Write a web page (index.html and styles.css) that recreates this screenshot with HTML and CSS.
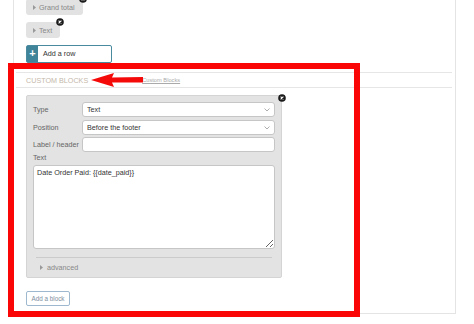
FILE: index.html
```html
<!DOCTYPE html>
<html lang="en">
<head>
    <meta charset="UTF-8">
    <meta name="viewport" content="width=device-width, initial-scale=1.0">
    <title>Custom Blocks</title>
    <link rel="stylesheet" href="styles.css">
</head>
<body>

    <div class="panel">
        <div class="tag">
            <svg class="caret" width="3" height="5" viewBox="0 0 3 5"><path d="M0 0 L3 2.5 L0 5 Z" fill="#999"/></svg>
            Grand total
            <svg class="close-x" width="8" height="8" viewBox="0 0 8 8"><circle cx="4" cy="4" r="3.8" fill="#1a1a1a"/><path d="M2.6 2.6 L5.4 5.4 M5.4 2.6 L2.6 5.4" stroke="#fff" stroke-width="1.1"/></svg>
        </div>
        <div class="tag">
            <svg class="caret" width="3" height="5" viewBox="0 0 3 5"><path d="M0 0 L3 2.5 L0 5 Z" fill="#999"/></svg>
            Text
            <svg class="close-x" width="8" height="8" viewBox="0 0 8 8"><circle cx="4" cy="4" r="3.8" fill="#1a1a1a"/><path d="M2.6 2.6 L5.4 5.4 M5.4 2.6 L2.6 5.4" stroke="#fff" stroke-width="1.1"/></svg>
        </div>

        <div class="add-row">
            <span class="plus">+</span>
            <span class="add-row-label">Add a row</span>
        </div>

        <div class="section-head">
            <span class="section-title">CUSTOM BLOCKS</span>
            <a class="section-link" href="#">Custom Blocks</a>
        </div>

        <div class="block">
            <svg class="close-x block-close" width="8" height="8" viewBox="0 0 8 8"><circle cx="4" cy="4" r="3.8" fill="#1a1a1a"/><path d="M2.6 2.6 L5.4 5.4 M5.4 2.6 L2.6 5.4" stroke="#fff" stroke-width="1.1"/></svg>

            <div class="field">
                <label class="field-label">Type</label>
                <div class="select-wrap">
                    <select class="control"><option>Text</option></select>
                    <svg class="chevron" width="6" height="4" viewBox="0 0 6 4"><path d="M0.5 0.5 L3 3 L5.5 0.5" fill="none" stroke="#999" stroke-width="0.8"/></svg>
                </div>
            </div>
            <div class="field">
                <label class="field-label">Position</label>
                <div class="select-wrap">
                    <select class="control"><option>Before the footer</option></select>
                    <svg class="chevron" width="6" height="4" viewBox="0 0 6 4"><path d="M0.5 0.5 L3 3 L5.5 0.5" fill="none" stroke="#999" stroke-width="0.8"/></svg>
                </div>
            </div>
            <div class="field">
                <label class="field-label">Label / header</label>
                <input class="control" type="text">
            </div>

            <div class="text-label">Text</div>
            <textarea class="text-area">Date Order Paid: {{date_paid}}</textarea>

            <hr class="divider">

            <div class="advanced">
                <svg class="caret" width="3" height="5" viewBox="0 0 3 5"><path d="M0 0 L3 2.5 L0 5 Z" fill="#999"/></svg>
                advanced
            </div>
        </div>

        <button class="add-block">Add a block</button>
    </div>

    <!-- annotation drawn over the screenshot -->
    <div class="highlight"></div>
    <svg class="arrow" width="58" height="20" viewBox="0 0 58 20">
        <path d="M3 10 L26 3 L24 7.5 L55 7 L55 12.5 L24 12.5 L26 17 Z" fill="#f50a0a"/>
    </svg>

</body>
</html>
```

FILE: styles.css
```css
body {
    margin: 0;
    font-family: "Liberation Sans", Arial, sans-serif;
    font-size: 7.2px;
    color: #333;
    background: #fff;
}

.panel {
    box-sizing: border-box;
    width: 443px;
    margin: -1px 0 0 13px;
    padding: 0 3px 7px 12px;
    border: 1px solid #e4e4e4;
    border-top: 0;
    display: flex;
    flex-direction: column;
    align-items: flex-start;
}

.tag {
    position: relative;
    height: 16px;
    padding: 0 8px 0 7px;
    display: flex;
    align-items: center;
    gap: 3px;
    background: #e2e2e2;
    border-radius: 3px;
    color: #888;
}

.tag + .tag {
    margin-top: 7px;
}

.close-x {
    position: absolute;
    top: -4px;
    right: -4px;
}

.add-row {
    margin-top: 7px;
    width: 86px;
    height: 18px;
    box-sizing: border-box;
    display: flex;
    border: 1.5px solid #4a8a9e;
    border-radius: 2px;
    background: #fff;
}

.plus {
    width: 11px;
    background: #3f8498;
    color: #fff;
    font-size: 11px;
    font-weight: bold;
    line-height: 15px;
    text-align: center;
}

.add-row-label {
    padding-left: 5px;
    line-height: 15px;
    color: #333;
}

.section-head {
    margin: 9px 0 0 -10px;
    align-self: stretch;
    height: 14px;
    padding-left: 10px;
    display: flex;
    align-items: center;
    border-top: 1px solid #e6e6e6;
    border-bottom: 1px solid #e6e6e6;
}

.section-title {
    color: #c4b8aa;
}

.section-link {
    margin-left: 54px;
    font-size: 5.7px;
    color: #aaa;
}

.block {
    position: relative;
    margin-top: 7px;
    box-sizing: border-box;
    width: 256px;
    padding: 6px 6px 0 6px;
    background: #e3e3e3;
    border: 1px solid #d4d4d4;
    border-radius: 2px;
}

.block-close {
    top: -2px;
    right: -5px;
}

.field {
    display: flex;
    align-items: center;
    height: 15px;
    margin-bottom: 2.5px;
}

.field:nth-of-type(3) {
    margin-bottom: 0;
}

.field-label {
    width: 49px;
    color: #666;
}

.select-wrap {
    position: relative;
    flex: 1;
    height: 15px;
}

.control {
    box-sizing: border-box;
    width: 193px;
    height: 15px;
    margin: 0;
    padding: 0 4px;
    border: 1px solid #c6c6c6;
    border-radius: 3px;
    background: #fff;
    font-family: inherit;
    font-size: 7.2px;
    color: #333;
    appearance: none;
    outline: none;
}

.chevron {
    position: absolute;
    right: 5px;
    top: 6px;
}

.text-label {
    height: 12px;
    line-height: 12px;
    color: #666;
}

.text-area {
    display: block;
    box-sizing: border-box;
    width: 242px;
    height: 84px;
    margin: 1px 0 0 0;
    padding: 2px 3px;
    border: 1px solid #c6c6c6;
    border-radius: 3px;
    font-family: inherit;
    font-size: 7.2px;
    color: #333;
    resize: vertical;
    outline: none;
}

.divider {
    margin: 8px 3px 0 3px;
    border: 0;
    border-top: 1px solid #cbcbcb;
}

.advanced {
    height: 19px;
    padding-left: 7px;
    display: flex;
    align-items: center;
    gap: 4px;
    color: #888;
}

.add-block {
    margin-top: 13px;
    width: 44px;
    height: 15px;
    padding: 0;
    background: #fff;
    border: 1px solid #9db8cf;
    border-radius: 2px;
    font-family: inherit;
    font-size: 6.3px;
    color: #7d8ea0;
}

.highlight {
    position: absolute;
    left: 8px;
    top: 63px;
    width: 352px;
    height: 254px;
    box-sizing: border-box;
    border: 6px solid #fb0606;
}

.arrow {
    position: absolute;
    left: 88px;
    top: 70px;
}
```
